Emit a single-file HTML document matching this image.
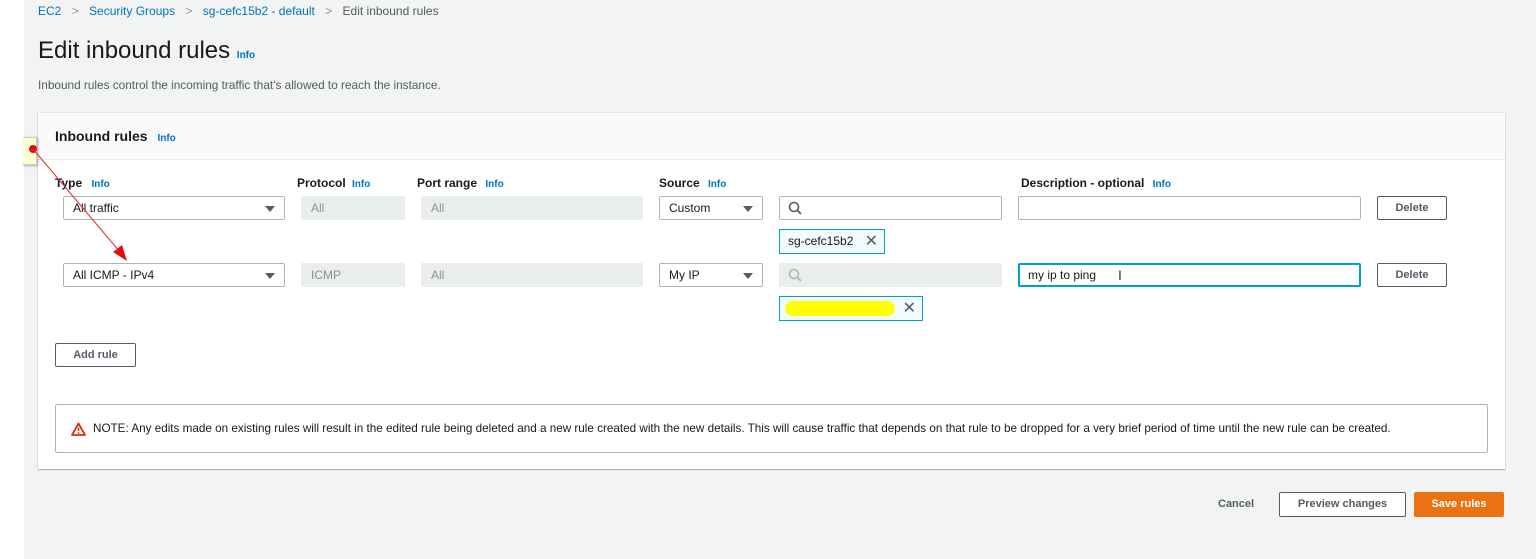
<!DOCTYPE html>
<html><head><meta charset="utf-8"><style>
*{box-sizing:border-box;margin:0;padding:0}
body{width:1536px;height:559px;overflow:hidden;background:#fff;font-family:"Liberation Sans",sans-serif;position:relative;color:#16191f}
.a{position:absolute}
.bg{left:24px;top:0;width:1512px;height:559px;background:#f2f3f3}
.info{color:#0073bb;font-size:10px;font-weight:bold}
.lbl{font-size:12px;font-weight:bold;color:#16191f}
.in{position:absolute;height:24px;border:1px solid #aab7b8;background:#fff;border-radius:2px;font-size:12px;line-height:22px;padding-left:9px;color:#16191f}
.dis{background:#eaeded;border-color:#eaeded;color:#879596}
.tri{position:absolute;right:9px;top:9px;width:0;height:0;border-left:5px solid transparent;border-right:5px solid transparent;border-top:6px solid #545b64}
.btn{position:absolute;height:24px;border:1px solid #545b64;background:#fff;border-radius:2px;font-size:11px;font-weight:bold;color:#545b64;text-align:center;line-height:22px}
.tok{position:absolute;height:25px;border:1px solid #00a1c9;background:#f1faff;font-size:12px;line-height:23px;padding-left:8px}
.x{position:absolute;right:6px;top:0;font-size:16px;color:#545b64}
</style></head><body>
<div class="a bg"></div>
<div class="a" style="left:38px;top:4px;font-size:12px;color:#0073bb">EC2 <span style="color:#879596;margin:0 7px">&gt;</span> Security Groups <span style="color:#879596;margin:0 7px">&gt;</span> sg-cefc15b2 - default <span style="color:#879596;margin:0 7px">&gt;</span> <span style="color:#545b64">Edit inbound rules</span></div>
<div class="a" style="left:38px;top:37px;font-size:24px;color:#16191f">Edit inbound rules <span class="info">Info</span></div>
<div class="a" style="left:38px;top:78px;font-size:11.8px;color:#545b64">Inbound rules control the incoming traffic that's allowed to reach the instance.</div>
<div class="a" style="left:38px;top:113px;width:1467px;height:356px;background:#fff;box-shadow:0 1px 1px rgba(0,28,36,.3),0 0 0 1px #e5e8e8"></div>
<div class="a" style="left:38px;top:113px;width:1467px;height:47px;background:#fafafa;border-bottom:1px solid #eaeded"></div>
<div class="a" style="left:55px;top:128px;font-size:14px;font-weight:bold">Inbound rules <span class="info" style="margin-left:6px">Info</span></div>
<div class="a" style="left:23px;top:137px;width:14px;height:28px;background:#ffffd0;border:1px solid #ccc;border-left:none;box-shadow:1px 1px 2px #aaa"></div>
<div class="a lbl" style="left:55px;top:176px">Type <span class="info" style="margin-left:6px">Info</span></div>
<div class="a lbl" style="left:297px;top:176px">Protocol <span class="info" style="margin-left:3px">Info</span></div>
<div class="a lbl" style="left:417px;top:176px">Port range <span class="info" style="margin-left:5px">Info</span></div>
<div class="a lbl" style="left:659px;top:176px">Source <span class="info" style="margin-left:5px">Info</span></div>
<div class="a lbl" style="left:1021px;top:176px">Description - optional <span class="info" style="margin-left:5px">Info</span></div>

<div class="in" style="left:63px;top:196px;width:222px">All traffic<div class="tri"></div></div>
<div class="in dis" style="left:301px;top:196px;width:104px">All</div>
<div class="in dis" style="left:421px;top:196px;width:222px">All</div>
<div class="in" style="left:659px;top:196px;width:104px">Custom<div class="tri"></div></div>
<div class="in" style="left:779px;top:196px;width:223px"><svg width="14" height="14" style="position:absolute;left:8px;top:4px"><circle cx="6" cy="6" r="4.5" fill="none" stroke="#545b64" stroke-width="1.6"/><line x1="9.5" y1="9.5" x2="13" y2="13" stroke="#545b64" stroke-width="1.8"/></svg></div>
<div class="in" style="left:1018px;top:196px;width:343px"></div>
<div class="btn" style="left:1377px;top:196px;width:70px">Delete</div>
<div class="tok" style="left:779px;top:229px;width:106px">sg-cefc15b2<span class="x">✕</span></div>

<div class="in" style="left:63px;top:263px;width:222px">All ICMP - IPv4<div class="tri"></div></div>
<div class="in dis" style="left:301px;top:263px;width:104px">ICMP</div>
<div class="in dis" style="left:421px;top:263px;width:222px">All</div>
<div class="in" style="left:659px;top:263px;width:104px">My IP<div class="tri"></div></div>
<div class="in dis" style="left:779px;top:263px;width:223px"><svg width="14" height="14" style="position:absolute;left:8px;top:4px"><circle cx="6" cy="6" r="4.5" fill="none" stroke="#aab7b8" stroke-width="1.6"/><line x1="9.5" y1="9.5" x2="13" y2="13" stroke="#aab7b8" stroke-width="1.8"/></svg></div>
<div class="in" style="left:1018px;top:263px;width:343px;border:2px solid #00a1c9;padding-left:8px;line-height:20px">my ip to ping<span style="position:absolute;left:98px;top:0;font-size:14px;color:#333">I</span></div>
<div class="btn" style="left:1377px;top:263px;width:70px">Delete</div>
<div class="tok" style="left:779px;top:296px;width:144px"><div class="a" style="left:5px;top:4px;width:110px;height:15px;background:#ffff00;border-radius:8px"></div><span class="x">✕</span></div>

<div class="btn" style="left:55px;top:343px;width:81px">Add rule</div>
<div class="a" style="left:55px;top:404px;width:1433px;height:49px;border:1px solid #aab7b8;border-radius:2px"></div>
<svg class="a" style="left:71px;top:422px" width="15" height="14"><path d="M7.5 1.5 L14 13 H1 Z" fill="none" stroke="#d13212" stroke-width="1.8" stroke-linejoin="round"/><line x1="7.5" y1="5.5" x2="7.5" y2="9" stroke="#d13212" stroke-width="1.6"/><circle cx="7.5" cy="11" r="0.9" fill="#d13212"/></svg>
<div class="a" style="left:93px;top:422px;font-size:11.7px;color:#16191f;white-space:nowrap">NOTE: Any edits made on existing rules will result in the edited rule being deleted and a new rule created with the new details. This will cause traffic that depends on that rule to be dropped for a very brief period of time until the new rule can be created.</div>

<div class="a" style="left:1218px;top:498px;font-size:11px;font-weight:bold;color:#545b64">Cancel</div>
<div class="btn" style="left:1279px;top:492px;width:127px;height:25px;line-height:23px">Preview changes</div>
<div class="btn" style="left:1414px;top:492px;width:90px;height:25px;line-height:23px;background:#ec7211;border-color:#ec7211;color:#fff">Save rules</div>

<svg class="a" style="left:0;top:0" width="200" height="300"><circle cx="33" cy="149" r="4" fill="#e01010"/><line x1="33" y1="149" x2="120" y2="252" stroke="#e03030" stroke-width="1"/><path d="M127 261 L113 252 L122 245 Z" fill="#e01010"/></svg>
</body></html>
